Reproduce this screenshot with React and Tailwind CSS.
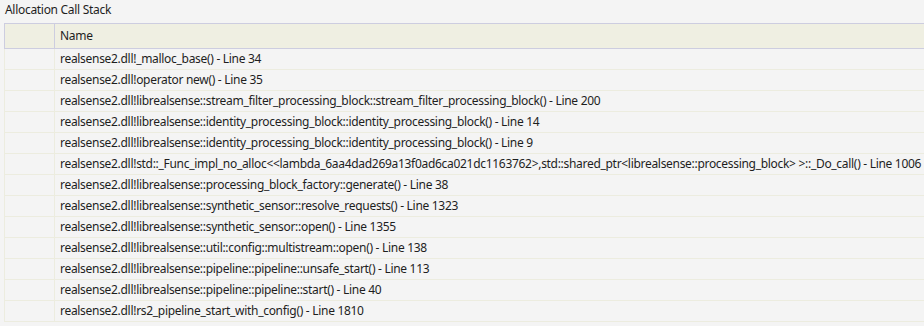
import React from 'react';

const FRAMES = [
  'realsense2.dll!_malloc_base() - Line 34',
  'realsense2.dll!operator new() - Line 35',
  'realsense2.dll!librealsense::stream_filter_processing_block::stream_filter_processing_block() - Line 200',
  'realsense2.dll!librealsense::identity_processing_block::identity_processing_block() - Line 14',
  'realsense2.dll!librealsense::identity_processing_block::identity_processing_block() - Line 9',
  'realsense2.dll!std::_Func_impl_no_alloc<<lambda_6aa4dad269a13f0ad6ca021dc1163762>,std::shared_ptr<librealsense::processing_block> >::_Do_call() - Line 1006',
  'realsense2.dll!librealsense::processing_block_factory::generate() - Line 38',
  'realsense2.dll!librealsense::synthetic_sensor::resolve_requests() - Line 1323',
  'realsense2.dll!librealsense::synthetic_sensor::open() - Line 1355',
  'realsense2.dll!librealsense::util::config::multistream::open() - Line 138',
  'realsense2.dll!librealsense::pipeline::pipeline::unsafe_start() - Line 113',
  'realsense2.dll!librealsense::pipeline::pipeline::start() - Line 40',
  'realsense2.dll!rs2_pipeline_start_with_config() - Line 1810',
];

export default function App() {
  return (
    <div className="w-[924px] h-[326px] overflow-hidden bg-[#f4f4f4] text-[#1e1e1e] text-[12px] tracking-[-0.3px] font-['Noto_Sans',sans-serif]">
      {/* Title */}
      <div className="h-[23px] pl-[5px] pt-[1px] leading-[18px]">Allocation Call Stack</div>

      {/* Table */}
      <div className="ml-[4px]">
        <div className="flex h-[26px] bg-[#efefe2] border-y border-l border-[#cdcde0]">
          <div className="w-[50px] border-r border-[#cdcde0]" />
          <div className="pl-[5px] leading-[24px]">Name</div>
        </div>
        {FRAMES.map((f) => (
          <div key={f} className="flex h-[21px] border-b border-l border-[#ececdf]">
            <div className="w-[50px] shrink-0 border-r border-[#ececdf]" />
            <div className="pl-[5px] leading-[20px] whitespace-nowrap">{f}</div>
          </div>
        ))}
      </div>
    </div>
  );
}
